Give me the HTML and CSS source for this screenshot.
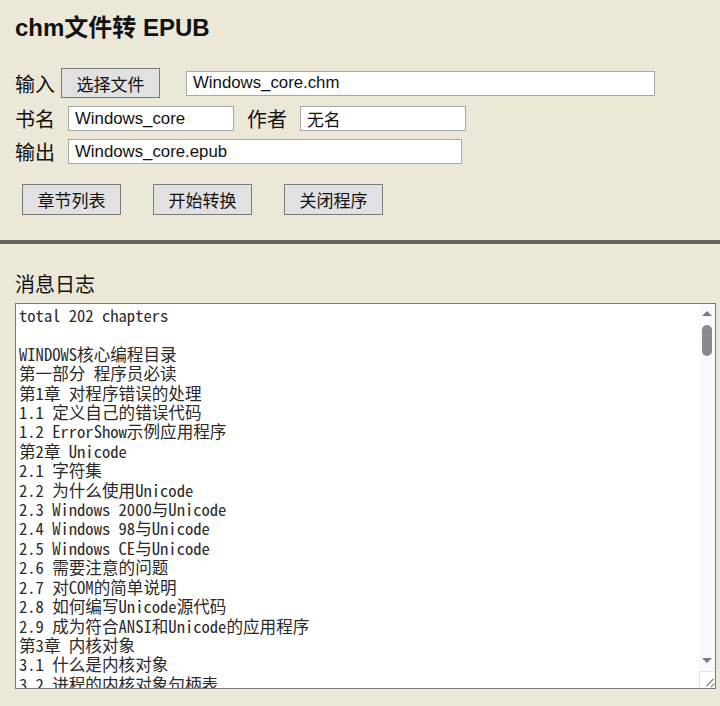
FILE: index.html
```html
<!DOCTYPE html>
<html lang="zh-CN">
<head>
    <meta charset="UTF-8">
    <meta name="viewport" content="width=device-width, initial-scale=1.0">
    <title>chm文件转 EPUB</title>
    <link rel="stylesheet" href="styles.css">
</head>
<body>

    <div class="top">
        <h1 class="title">chm文件转 EPUB</h1>

        <div class="row">
            <span class="label">输入</span>
            <button class="btn pick">选择文件</button>
            <input type="text" class="field field-in" id="chmPath" value="Windows_core.chm">
        </div>
        <div class="row">
            <span class="label label-fixed">书名</span>
            <input type="text" class="field field-short" id="bookName" value="Windows_core">
            <span class="label label-mid">作者</span>
            <input type="text" class="field field-short" id="bookAuthor" value="无名">
        </div>
        <div class="row">
            <span class="label label-fixed">输出</span>
            <input type="text" class="field field-out" id="epubPath" value="Windows_core.epub">
        </div>

        <div class="actions">
            <button class="btn">章节列表</button>
            <button class="btn">开始转换</button>
            <button class="btn">关闭程序</button>
        </div>
    </div>

    <div class="divider"></div>

    <div class="log">
        <h2 class="log-title">消息日志</h2>
        <div class="log-frame">
            <textarea class="log-box" id="logBox" readonly>total 202 chapters

WINDOWS核心编程目录
第一部分 程序员必读
第1章 对程序错误的处理
1.1 定义自己的错误代码
1.2 ErrorShow示例应用程序
第2章 Unicode
2.1 字符集
2.2 为什么使用Unicode
2.3 Windows 2000与Unicode
2.4 Windows 98与Unicode
2.5 Windows CE与Unicode
2.6 需要注意的问题
2.7 对COM的简单说明
2.8 如何编写Unicode源代码
2.9 成为符合ANSI和Unicode的应用程序
第3章 内核对象
3.1 什么是内核对象
3.2 进程的内核对象句柄表
3.3 跨越进程边界共享内核对象
第4章 进程
4.1 编写第一个Windows应用程序
4.2 CreateProcess函数
4.3 终止进程的运行
4.4 子进程
4.5 运行的进程
第5章 作业
5.1 对作业进程的限制
5.2 终止作业中所有进程的运行
5.3 查询作业统计信息
5.4 作业通知信息
5.5 JobLab示例应用程序
第6章 线程的基础知识
6.1 何时创建线程
6.2 何时不能创建线程
6.3 编写第一个线程函数
6.4 CreateThread函数
6.5 终止线程的运行
6.6 线程的一些性质
6.7 C/C++运行期库的考虑
6.8 对自己的ID概念应该有所了解</textarea>
            <!-- scrollbar drawn over the right edge of the log -->
            <div class="scroll">
                <span class="arrow arrow-up"></span>
                <span class="thumb"></span>
                <span class="arrow arrow-down"></span>
            </div>
            <span class="corner"></span>
        </div>
    </div>

</body>
</html>
```

FILE: styles.css
```css
body {
    font-family: "Liberation Sans", "Noto Sans CJK SC", sans-serif;
    background-color: #ebe8d8;
    color: #111;
    margin: 0;
}
.top {
    padding: 12px 15px 0 15px;
}
.title {
    font-size: 24px;
    font-weight: bold;
    line-height: 32px;
    margin: 0 0 24px 0;
}
.row {
    display: flex;
    align-items: center;
    margin-bottom: 8px;
    height: 25px;
}
.row:first-of-type {
    height: 30px;
}
.label {
    font-family: "Noto Sans CJK SC", sans-serif;
    font-size: 20px;
    line-height: 25px;
}
.label-fixed {
    width: 53px;
}
.label-mid {
    margin: 0 13px;
}
.btn {
    font-family: "Noto Sans CJK SC", sans-serif;
    font-size: 17px;
    width: 99px;
    height: 31px;
    padding: 0;
    background-color: #e1e1e1;
    color: #111;
    border: 1px solid #7a7a7a;
    border-radius: 0;
}
.pick {
    height: 30px;
    margin: 0 26px 0 6px;
}
.field {
    font-family: "Liberation Sans", "Noto Sans CJK SC", sans-serif;
    font-size: 16.8px;
    height: 25px;
    box-sizing: border-box;
    padding: 0 6px;
    background-color: white;
    color: #111;
    border: 1px solid #a8a8a8;
    outline: none;
}
.field-in {
    width: 469px;
}
.field-short {
    width: 166px;
}
.field-out {
    width: 394px;
}
.actions {
    display: flex;
    gap: 32px;
    padding: 12px 0 0 7px;
}
.divider {
    height: 4px;
    background-color: #64645c;
    margin-top: 25px;
}
.log {
    padding: 0 4px 0 15px;
}
.log-title {
    font-family: "Noto Sans CJK SC", sans-serif;
    font-size: 20px;
    font-weight: normal;
    line-height: 28px;
    margin: 26px 0 5px 0;
}
.log-frame {
    position: relative;
    width: 701px;
    height: 386px;
}
.log-box {
    display: block;
    width: 100%;
    height: 100%;
    box-sizing: border-box;
    margin: 0;
    padding: 2px 20px 2px 3px;
    font-family: "Noto Sans Mono CJK SC", "Liberation Mono", monospace;
    font-size: 16.6px;
    line-height: 19.4px;
    color: #2a2a2a;
    background-color: white;
    border: 1px solid #7a7a7a;
    resize: none;
    outline: none;
    overflow: hidden;
}
.scroll {
    position: absolute;
    top: 1px;
    right: 1px;
    bottom: 18px;
    width: 16px;
    background-color: #f9f9fb;
}
.arrow {
    position: absolute;
    left: 3px;
    width: 0;
    height: 0;
    border-left: 5px solid transparent;
    border-right: 5px solid transparent;
}
.arrow-up {
    top: 7px;
    border-bottom: 5px solid #7c7c7c;
}
.arrow-down {
    bottom: 8px;
    border-top: 5px solid #7c7c7c;
}
.thumb {
    position: absolute;
    top: 21px;
    left: 3px;
    width: 10px;
    height: 31px;
    border-radius: 5px;
    background-color: #8a8a8a;
}
.corner {
    position: absolute;
    right: 1px;
    bottom: 1px;
    width: 16px;
    height: 17px;
    box-sizing: border-box;
    background-color: #fff;
    border-top: 1px solid #e4e4e4;
    border-left: 1px solid #e4e4e4;
}
.corner::before,
.corner::after {
    content: "";
    position: absolute;
    height: 1px;
    background-color: #666;
    transform: rotate(-45deg);
}
.corner::before {
    right: 0;
    bottom: 5px;
    width: 10px;
}
.corner::after {
    right: 0;
    bottom: 2px;
    width: 5px;
}
```
